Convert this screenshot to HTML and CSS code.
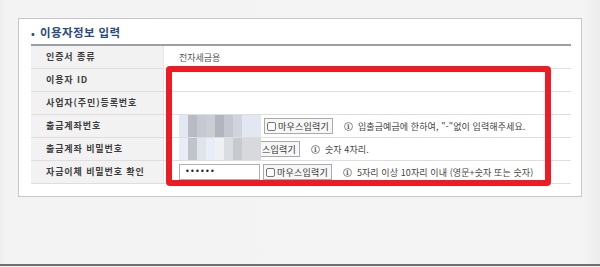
FILE: index.html
```html
<!DOCTYPE html>
<html lang="ko">
<head>
<meta charset="utf-8">
<link rel="stylesheet" href="styles.css">
</head>
<body>
<div class="frame">
  <div class="panel">
    <h2 class="title"><span class="bullet">•</span>이용자정보 입력</h2>
    <div class="table">
      <div class="row"><div class="th">인증서 종류</div><div class="td">전자세금용</div></div>
      <div class="row"><div class="th">이용자 ID</div><div class="td"></div></div>
      <div class="row"><div class="th">사업자(주민)등록번호</div><div class="td"></div></div>
      <div class="row">
        <div class="th">출금계좌번호</div>
        <div class="td">
          <div class="blur b1"></div>
          <label class="mbtn"><span class="chk"></span>마우스입력기</label>
          <span class="info">i</span><span class="hint">입출금예금에 한하여, "-"없이 입력해주세요.</span>
        </div>
      </div>
      <div class="row">
        <div class="th">출금계좌 비밀번호</div>
        <div class="td">
          <div class="blur b2"></div>
          <label class="mbtn part">스입력기</label>
          <span class="info">i</span><span class="hint">숫자 4자리.</span>
        </div>
      </div>
      <div class="row">
        <div class="th">자금이체 비밀번호 확인</div>
        <div class="td">
          <div class="pw">••••••</div>
          <label class="mbtn"><span class="chk"></span>마우스입력기</label>
          <span class="info">i</span><span class="hint">5자리 이상 10자리 이내 (영문+숫자 또는 숫자)</span>
        </div>
      </div>
    </div>
    <div class="redbox"></div>
  </div>
</div>
</body>
</html>
```
FILE: styles.css
```css
html, body { margin: 0; padding: 0; }
body {
  width: 600px; height: 267px; overflow: hidden;
  font-family: "Noto Sans CJK KR", "Noto Sans", sans-serif;
  background: #f0f0f0;
}
.frame {
  width: 600px; height: 266px;
  background: linear-gradient(90deg, #eeeeee 0, #f3f3f3 6px, #f4f4f4 585px, #ececec 600px);
  border-bottom: 2px solid #6e6e6e;
  padding-top: 18px;
  box-sizing: border-box;
}
.panel {
  position: relative;
  margin-left: 18px;
  width: 564px; height: 179px;
  box-sizing: border-box;
  background: #fff;
  border: 1px solid #c8c8c8;
  padding: 0 10px 0 12px;
}
.title {
  margin: 0; height: 25px; line-height: 27px;
  font-size: 11.5px; font-weight: bold; color: #2b4c7e;
  letter-spacing: 0.4px;
}
.bullet { display: inline-block; width: 9px; font-size: 10px; color: #2b4c7e; }
.table { border-top: 2px solid #9aa0a6; }
.row {
  display: flex; height: 22px;
  border-bottom: 1px solid #dedede;
}
.th {
  width: 133px; flex: none;
  background: #f2f2f2;
  border-right: 1px solid #e6e6e6;
  padding-left: 15px; box-sizing: border-box;
  font-size: 9px; font-weight: bold; color: #3d3d3d;
  line-height: 22px; letter-spacing: 0.9px;
  white-space: nowrap;
}
.td {
  flex: 1; display: flex; align-items: center;
  padding-left: 15px;
  font-size: 9px; color: #555;
  white-space: nowrap;
}
.blur { width: 82px; height: 22px; flex: none; }
.b1 {
  background: linear-gradient(90deg, #e2e7f1 0 9px, #b8bbc5 9px 18px, #c6c9d2 18px 27px, #cbcdd5 27px 36px, #b2b5be 36px 45px, #c4c7d0 45px 54px, #d1d4dc 54px 63px, #e3e7f1 63px 82px);
}
.b2 {
  background: linear-gradient(90deg, #e8ecf5 0 9px, #c0c3cb 9px 18px, #dfe3ea 18px 27px, #e9edf7 27px 36px, #eef0f4 36px 45px, #dadde2 45px 54px, #c8cacf 54px 63px, #d7d9dd 63px 82px);
}
.mbtn {
  display: flex; align-items: center; flex: none;
  height: 16px; box-sizing: border-box;
  margin-left: 3px; padding: 0 3px 0 2px;
  border: 1px solid #aaa; background: #f7f7f7;
  font-size: 9px; color: #333; letter-spacing: 0.2px;
}
.mbtn.part { margin-left: 0; border-left: none; padding-left: 1px; }
.chk {
  width: 9px; height: 9px; box-sizing: border-box;
  border: 1px solid #777; background: #fff; border-radius: 2px;
  margin-right: 2px;
}
.info {
  display: inline-flex; align-items: center; justify-content: center; flex: none;
  width: 9px; height: 9px; box-sizing: border-box;
  border: 1px solid #888; border-radius: 50%;
  font-family: "DejaVu Serif", serif; font-size: 7px; font-weight: bold; color: #666;
  margin-left: 11px; margin-right: 5px;
}
.hint { color: #444; letter-spacing: 0.1px; }
.pw {
  width: 81px; height: 16px; flex: none; box-sizing: border-box;
  border: 1px solid #b0b0b0; background: #fff;
  font-family: "DejaVu Sans", sans-serif;
  font-size: 8px; line-height: 14px; padding-left: 5px; color: #222; letter-spacing: 0.3px;
}
.redbox {
  position: absolute; left: 147px; top: 47px;
  width: 385px; height: 120px; box-sizing: border-box;
  border: 6px solid #ed1c24; border-radius: 4px;
}
```
